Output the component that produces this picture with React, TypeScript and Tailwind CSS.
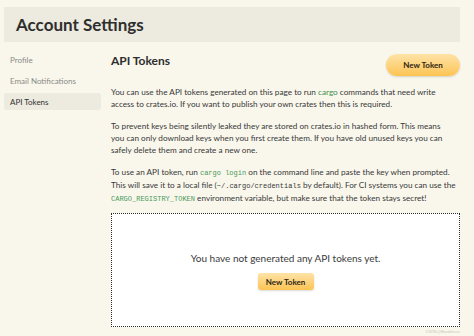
import React from "react";

const font = { fontFamily: "Lato, 'Noto Sans', sans-serif" };

function YellowButton({ small }: { small?: boolean }) {
  return (
    <button
      className={
        small
          ? "h-[17px] w-[56px] rounded-[3px] bg-gradient-to-b from-[#fee3a6] to-[#fcc450] text-[8px] font-bold text-[#2f2510] shadow-[0_1px_2px_rgba(0,0,0,0.15)]"
          : "h-[22px] w-[74px] rounded-full bg-gradient-to-b from-[#fee3a6] to-[#fcc450] text-[8px] font-bold text-[#2f2510] shadow-[0_1px_2px_rgba(0,0,0,0.15)]"
      }
    >
      New Token
    </button>
  );
}

const code = "font-['Liberation_Mono',monospace] text-[7px] text-[#4b9a5c]";

export default function App() {
  return (
    <div className="min-h-[336px] w-[474px] bg-[#f9f7ec] pl-[4px] pr-[14px] pt-[7px] text-[#383838]" style={font}>
      {/* header */}
      <div className="flex h-[35px] items-center bg-[#edeadf] pl-[12px]">
        <h1 className="text-[17px] font-bold leading-none text-[#2e2e2e]">Account Settings</h1>
      </div>

      <div className="flex gap-[10px]">
        {/* sidebar */}
        <nav className="mt-[9px] flex w-[97px] flex-col gap-[4px] text-[8px]">
          <div className="flex h-[17px] items-center pl-[6px] text-[#8a8a86]">Profile</div>
          <div className="flex h-[17px] items-center pl-[6px] text-[#8a8a86]">Email Notifications</div>
          <div className="flex h-[17px] items-center rounded-[2px] bg-[#edebdf] pl-[6px] text-[#333]">API Tokens</div>
        </nav>

        {/* main */}
        <main className="w-[349px] text-[8.2px] leading-[12px]">
          <div className="mt-[12px] flex items-start justify-between">
            <h2 className="text-[12px] font-bold leading-[14px] text-[#2e2e2e]">API Tokens</h2>
            <YellowButton />
          </div>

          <p className="mt-[10px] whitespace-nowrap">
            You can use the API tokens generated on this page to run{" "}
            <span className="text-[#3e9150]">cargo</span> commands that need write
            <br />
            access to crates.io. If you want to publish your own crates then this is required.
          </p>

          <p className="mt-[10px] whitespace-nowrap">
            To prevent keys being silently leaked they are stored on crates.io in hashed form. This means
            <br />
            you can only download keys when you first create them. If you have old unused keys you can
            <br />
            safely delete them and create a new one.
          </p>

          <p className="mt-[10px] whitespace-nowrap">
            To use an API token, run <span className={code}>cargo login</span> on the command line and paste
            the key when prompted.
            <br />
            This will save it to a local file (
            <span className="font-['Liberation_Mono',monospace] text-[7px]">~/.cargo/credentials</span> by
            default). For CI systems you can use the
            <br />
            <span className={code}>CARGO_REGISTRY_TOKEN</span> environment variable, but make sure that the
            token stays secret!
          </p>

          <div className="mt-[8px] flex h-[114px] flex-col items-center border border-dotted border-[#2a2a2a] bg-white pt-[37px]">
            <p className="text-[10px] leading-[14px] text-[#3a3a3a]">You have not generated any API tokens yet.</p>
            <div className="mt-[8px]">
              <YellowButton small />
            </div>
          </div>
          <div className="flex justify-end pt-[2px] text-[4px] leading-[6px] text-[#c8c6bc]">CSDN @Roaddriver</div>
        </main>
      </div>
    </div>
  );
}
